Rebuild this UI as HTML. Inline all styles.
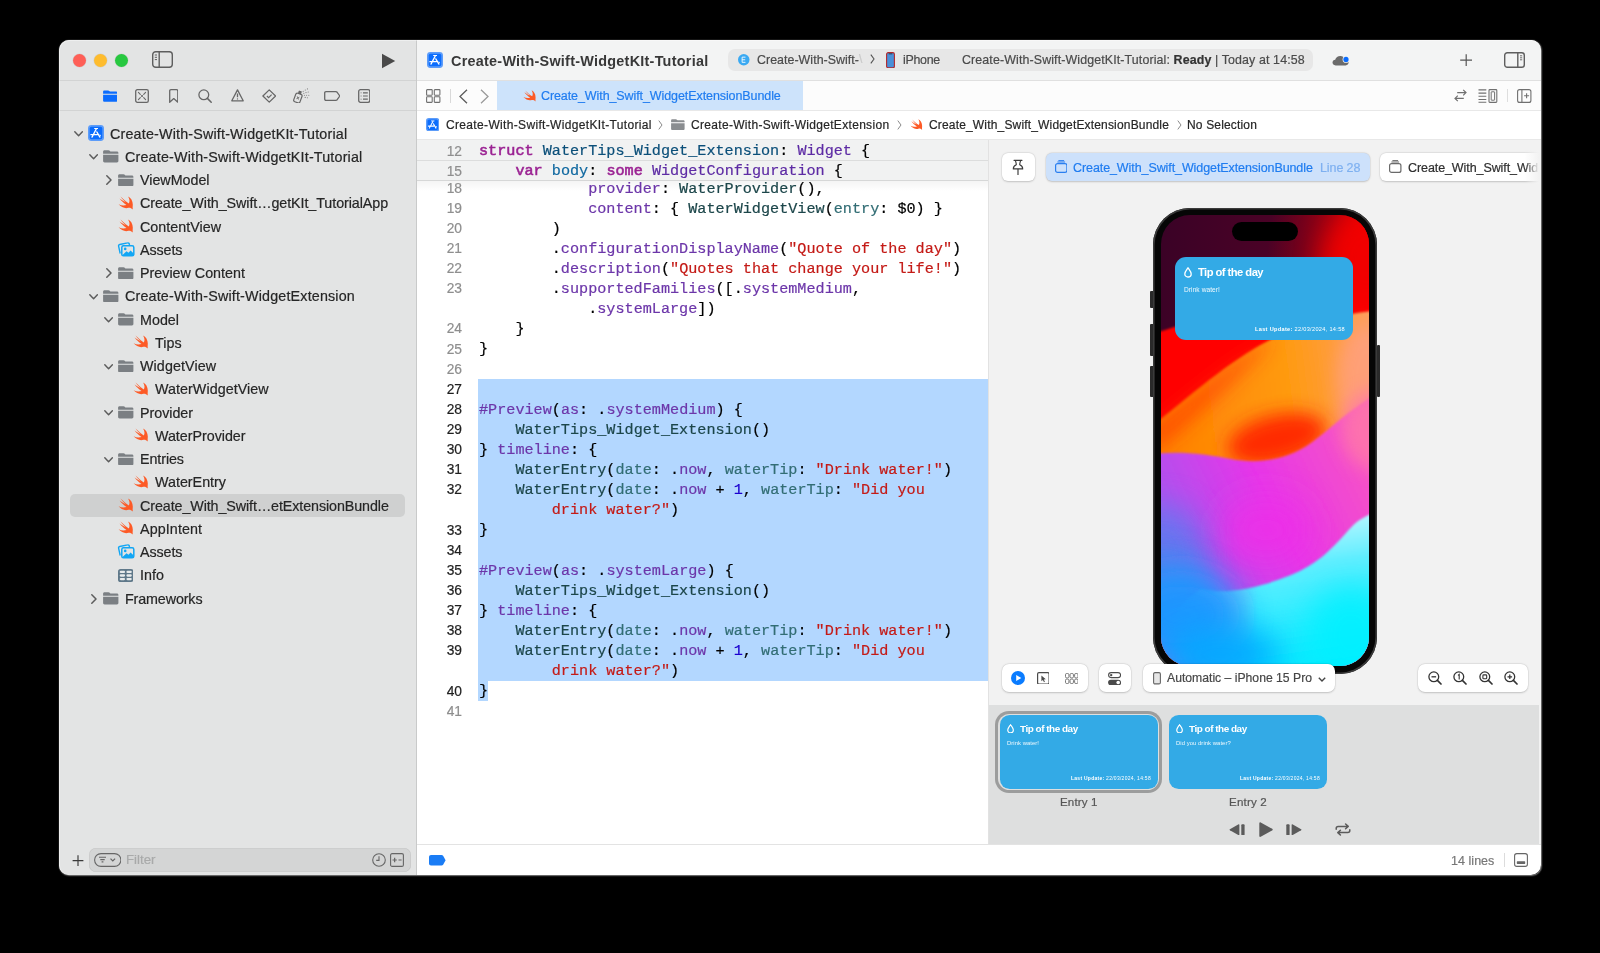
<!DOCTYPE html>
<html><head><meta charset="utf-8">
<style>
html,body{margin:0;padding:0;background:#000;width:1600px;height:953px;overflow:hidden}
.a{position:absolute;display:block}
#win{position:absolute;left:59px;top:40px;width:1482px;height:835px;overflow:hidden;border-radius:10px;background:#fff}
#in{position:absolute;left:-59px;top:-40px;width:1600px;height:953px;font-family:"Liberation Sans",sans-serif;color:#262626}
.t{position:absolute;white-space:pre;will-change:transform}
.sk{-webkit-text-stroke:0.2px currentColor}
.kw{color:#9b2393;-webkit-text-stroke:0.55px #9b2393}
.td{color:#0b4f79}
.ot{color:#5d2ba4}
.od{color:#0f68a0}
.pf{color:#6c36a9}
.pt{color:#1c464a}
.pm{color:#326d74}
.st{color:#c41a16}
.nu{color:#1c00cf}
</style></head>
<body>
<div id="win"><div id="in">
<div class="a" style="left:59px;top:40px;width:357px;height:835px;background:#e3e4e4;"></div>
<div class="a" style="left:416px;top:40px;width:1px;height:835px;background:#c9caca;"></div>
<div class="a" style="left:59px;top:80px;width:357px;height:1px;background:#d2d3d3;"></div>
<div class="a" style="left:59px;top:110px;width:357px;height:1px;background:#d2d3d3;"></div>
<div class="a" style="left:73.0px;top:53.5px;width:13px;height:13px;border-radius:50%;background:#fe5f57;box-shadow:0 0 0 0.5px rgba(0,0,0,0.08)"></div>
<div class="a" style="left:94.0px;top:53.5px;width:13px;height:13px;border-radius:50%;background:#febc2e;box-shadow:0 0 0 0.5px rgba(0,0,0,0.08)"></div>
<div class="a" style="left:115.0px;top:53.5px;width:13px;height:13px;border-radius:50%;background:#28c840;box-shadow:0 0 0 0.5px rgba(0,0,0,0.08)"></div>
<svg class="a" style="left:151.5px;top:51px;" width="21" height="17" viewBox="0 0 21 17"><rect x="0.7" y="0.7" width="19.6" height="15.6" rx="3" fill="none" stroke="#5e5e5e" stroke-width="1.4"/><path d="M7.2 0.7 V16.3" stroke="#5e5e5e" stroke-width="1.4"/><path d="M2.8 4 H5 M2.8 6.3 H5 M2.8 8.6 H5" stroke="#5e5e5e" stroke-width="1"/></svg>
<svg class="a" style="left:381px;top:52.5px;" width="15" height="16" viewBox="0 0 15 16"><path d="M1 0.8 L14.2 8 L1 15.2 Z" fill="#4a4a4a"/></svg>
<svg class="a" style="left:102.8px;top:89.5px;" width="14.5" height="12.2" viewBox="0 0 16 13"><path fill="#0b6cfe" d="M1.6 0.2 H5.6 C6.2 0.2 6.6 0.5 7 0.9 L7.6 1.5 H14.4 C15.3 1.5 15.9 2.1 15.9 3 V3.9 H0.1 V1.7 C0.1 0.8 0.7 0.2 1.6 0.2 Z"/><path fill="#0b6cfe" d="M0.1 4.9 H15.9 V11.3 C15.9 12.2 15.3 12.8 14.4 12.8 H1.6 C0.7 12.8 0.1 12.2 0.1 11.3 Z"/></svg>
<svg class="a" style="left:135px;top:88.8px;" width="14" height="14" viewBox="0 0 14 14"><rect x="0.7" y="0.7" width="12.6" height="12.6" rx="1.6" fill="none" stroke="#676767" stroke-width="1.3"/><path d="M3.4 3.4 L5.3 5.3 M10.6 3.4 L8.7 5.3 M3.4 10.6 L5.3 8.7 M10.6 10.6 L8.7 8.7" stroke="#676767" stroke-width="1.1" stroke-linecap="round"/><circle cx="7" cy="7" r="1.1" fill="#676767"/></svg>
<svg class="a" style="left:168.8px;top:88.8px;" width="9.5" height="14" viewBox="0 0 9.5 14"><path d="M0.7 13.2 V2 C0.7 1.2 1.2 0.7 2 0.7 H7.5 C8.3 0.7 8.8 1.2 8.8 2 V13.2 L4.75 9.6 Z" fill="none" stroke="#676767" stroke-width="1.3" stroke-linejoin="round"/></svg>
<svg class="a" style="left:198.3px;top:88.8px;" width="14" height="14" viewBox="0 0 14 14"><circle cx="5.8" cy="5.8" r="4.9" fill="none" stroke="#676767" stroke-width="1.3"/><path d="M9.4 9.4 L13.2 13.2" stroke="#676767" stroke-width="1.5" stroke-linecap="round"/></svg>
<svg class="a" style="left:230.5px;top:88.5px;" width="13" height="13" viewBox="0 0 13 13"><path d="M6.5 0.9 L12.2 11.8 H0.8 Z" fill="none" stroke="#676767" stroke-width="1.3" stroke-linejoin="round"/><path d="M6.5 4.5 V8.2" stroke="#676767" stroke-width="1.3"/><circle cx="6.5" cy="9.9" r="0.7" fill="#676767"/></svg>
<svg class="a" style="left:261.7px;top:88.6px;" width="14.5" height="14" viewBox="0 0 14.5 14"><path d="M7.25 0.9 L13.6 7 L7.25 13.1 L0.9 7 Z" fill="none" stroke="#676767" stroke-width="1.3" stroke-linejoin="round"/><path d="M4.9 7 L6.6 8.6 L9.6 5.6" stroke="#676767" stroke-width="1.2" fill="none"/></svg>
<svg class="a" style="left:292.5px;top:87.8px;" width="17" height="15.5" viewBox="0 0 17 15.5"><g transform="rotate(20 5 10)"><rect x="1.6" y="5.6" width="6.6" height="9" rx="1.6" fill="none" stroke="#676767" stroke-width="1.2"/><rect x="3.3" y="2.6" width="3.2" height="3" rx="0.6" fill="#676767"/><path d="M3.8 8.8 L6 11.2 M6 8.8 L3.8 11.2" stroke="#676767" stroke-width="0.8"/></g><g fill="#676767" opacity="0.85"><circle cx="10.2" cy="3.2" r="0.55"/><circle cx="12.3" cy="2" r="0.55"/><circle cx="14.4" cy="0.9" r="0.55"/><circle cx="10.8" cy="5.2" r="0.55"/><circle cx="13" cy="4.6" r="0.55"/><circle cx="15.2" cy="4" r="0.55"/><circle cx="11.4" cy="7.2" r="0.55"/><circle cx="13.6" cy="7.2" r="0.55"/><circle cx="15.8" cy="7.2" r="0.55"/><circle cx="12.2" cy="9.4" r="0.55"/><circle cx="14.4" cy="9.8" r="0.55"/></g></svg>
<svg class="a" style="left:323.8px;top:90.5px;" width="16.5" height="10" viewBox="0 0 16.5 10"><path d="M2 0.7 H11.8 C12.4 0.7 12.8 0.9 13.2 1.3 L15.8 5 L13.2 8.7 C12.8 9.1 12.4 9.3 11.8 9.3 H2 C1.2 9.3 0.7 8.8 0.7 8 V2 C0.7 1.2 1.2 0.7 2 0.7 Z" fill="none" stroke="#676767" stroke-width="1.3"/></svg>
<svg class="a" style="left:357.8px;top:88.6px;" width="12.5" height="14" viewBox="0 0 12.5 14"><rect x="0.7" y="0.7" width="11.1" height="12.6" rx="1.8" fill="none" stroke="#676767" stroke-width="1.3"/><path d="M5 3.8 H9.8 M5 7 H9.8 M5 10.2 H9.8" stroke="#676767" stroke-width="1.2"/><path d="M2.6 3.8 H3.6 M2.6 7 H3.6 M2.6 10.2 H3.6" stroke="#676767" stroke-width="0.8"/></svg>
<div class="a" style="left:70px;top:494px;width:335px;height:23px;background:#cfd0d0;border-radius:5px"></div>
<svg class="a" style="left:73.8px;top:131.0px;" width="9.2" height="6" viewBox="0 0 9.2 6"><path d="M0.8 0.8 L4.6 4.8 L8.4 0.8" stroke="#5c5c5c" stroke-width="1.45" fill="none" stroke-linecap="round" stroke-linejoin="round"/></svg>
<svg class="a" style="left:88px;top:125.19999999999999px;" width="16" height="16" viewBox="0 0 16 16"><rect x="0" y="0" width="16" height="16" rx="3.4" fill="#5c9cf9"/><rect x="1.7" y="1.7" width="12.6" height="12.6" rx="1.8" fill="#0b6dfd"/><path d="M8.2 4.1 L4 12.1 M2.9 9.7 H9.2 M8.8 6.9 L11.9 12.1" stroke="#fff" stroke-width="1.25" fill="none" stroke-linecap="round"/><path d="M6.6 3.5 H9.6" stroke="#fff" stroke-width="1.0" stroke-linecap="round"/><path d="M11.3 9.5 L13 9.9 L12.2 11.6" fill="#fff"/></svg>
<div class="t sk" style="left:110.1px;top:125.72px;font-size:14.3px;color:#262626;font-weight:normal;letter-spacing:0.185px;line-height:16.45px;font-family:'Liberation Sans',sans-serif;">Create-With-Swift-WidgetKIt-Tutorial</div>
<svg class="a" style="left:88.8px;top:154.25px;" width="9.2" height="6" viewBox="0 0 9.2 6"><path d="M0.8 0.8 L4.6 4.8 L8.4 0.8" stroke="#5c5c5c" stroke-width="1.45" fill="none" stroke-linecap="round" stroke-linejoin="round"/></svg>
<svg class="a" style="left:103px;top:150.25px;" width="15.5" height="12.6" viewBox="0 0 16 13"><path fill="#7b7f83" d="M1.6 0.2 H5.6 C6.2 0.2 6.6 0.5 7 0.9 L7.6 1.5 H14.4 C15.3 1.5 15.9 2.1 15.9 3 V3.9 H0.1 V1.7 C0.1 0.8 0.7 0.2 1.6 0.2 Z"/><path fill="#7b7f83" d="M0.1 4.9 H15.9 V11.3 C15.9 12.2 15.3 12.8 14.4 12.8 H1.6 C0.7 12.8 0.1 12.2 0.1 11.3 Z"/></svg>
<div class="t sk" style="left:125.1px;top:148.97px;font-size:14.3px;color:#262626;font-weight:normal;letter-spacing:0.190px;line-height:16.45px;font-family:'Liberation Sans',sans-serif;">Create-With-Swift-WidgetKIt-Tutorial</div>
<svg class="a" style="left:106px;top:175.1px;" width="6" height="10" viewBox="0 0 6 10"><path d="M0.8 0.8 L5 5 L0.8 9.2" stroke="#5c5c5c" stroke-width="1.5" fill="none" stroke-linecap="round" stroke-linejoin="round"/></svg>
<svg class="a" style="left:118px;top:173.5px;" width="15.5" height="12.6" viewBox="0 0 16 13"><path fill="#7b7f83" d="M1.6 0.2 H5.6 C6.2 0.2 6.6 0.5 7 0.9 L7.6 1.5 H14.4 C15.3 1.5 15.9 2.1 15.9 3 V3.9 H0.1 V1.7 C0.1 0.8 0.7 0.2 1.6 0.2 Z"/><path fill="#7b7f83" d="M0.1 4.9 H15.9 V11.3 C15.9 12.2 15.3 12.8 14.4 12.8 H1.6 C0.7 12.8 0.1 12.2 0.1 11.3 Z"/></svg>
<div class="t sk" style="left:140.1px;top:172.22px;font-size:14.3px;color:#262626;font-weight:normal;letter-spacing:-0.019px;line-height:16.45px;font-family:'Liberation Sans',sans-serif;">ViewModel</div>
<svg class="a" style="left:118px;top:195.95px;" width="16.0" height="14.0" viewBox="0 0 16 14"><path fill="#fd5a26" d="M0.6 8.3 C3.2 11.3 7.2 12.9 10.3 11.8 C11.6 11.4 12.9 11.7 14.9 13.4 C14.4 11.9 14.8 10.3 14.8 8.4 C14.8 4.8 12.8 1.6 10.1 0.4 C11.7 3.0 11.9 5.6 10.8 7.4 C8.3 5.8 4.9 2.9 2.6 0.5 C4.2 2.9 6.1 4.8 8.1 6.6 C5.7 5.6 3.3 3.8 1.6 2.6 C3.2 4.8 5.6 7.2 8.5 9.1 C6.0 9.8 3.3 9.7 0.6 8.3 Z"/></svg>
<div class="t sk" style="left:140.1px;top:195.47px;font-size:14.3px;color:#262626;font-weight:normal;letter-spacing:-0.071px;line-height:16.45px;font-family:'Liberation Sans',sans-serif;">Create_With_Swift…getKIt_TutorialApp</div>
<svg class="a" style="left:118px;top:219.2px;" width="16.0" height="14.0" viewBox="0 0 16 14"><path fill="#fd5a26" d="M0.6 8.3 C3.2 11.3 7.2 12.9 10.3 11.8 C11.6 11.4 12.9 11.7 14.9 13.4 C14.4 11.9 14.8 10.3 14.8 8.4 C14.8 4.8 12.8 1.6 10.1 0.4 C11.7 3.0 11.9 5.6 10.8 7.4 C8.3 5.8 4.9 2.9 2.6 0.5 C4.2 2.9 6.1 4.8 8.1 6.6 C5.7 5.6 3.3 3.8 1.6 2.6 C3.2 4.8 5.6 7.2 8.5 9.1 C6.0 9.8 3.3 9.7 0.6 8.3 Z"/></svg>
<div class="t sk" style="left:140.1px;top:218.72px;font-size:14.3px;color:#262626;font-weight:normal;letter-spacing:0.018px;line-height:16.45px;font-family:'Liberation Sans',sans-serif;">ContentView</div>
<svg class="a" style="left:117px;top:241.95px;" width="18" height="15" viewBox="0 0 18 15"><path d="M3.2 11.5 L1.6 4.2 C1.4 3.4 1.9 2.7 2.7 2.5 L10.6 0.9 C11.4 0.7 12.1 1.2 12.3 2 L12.5 3" stroke="#12a6f4" stroke-width="1.4" fill="none"/><rect x="4.8" y="3.8" width="12" height="10" rx="1.6" fill="none" stroke="#12a6f4" stroke-width="1.5"/><circle cx="8.2" cy="6.9" r="1.3" fill="#12a6f4"/><path d="M5.5 13 L9.5 9.3 L11.5 10.8 L13.6 8.6 L16.2 11 V13.3 H5.5 Z" fill="#12a6f4"/></svg>
<div class="t sk" style="left:140.1px;top:241.97px;font-size:14.3px;color:#262626;font-weight:normal;letter-spacing:-0.101px;line-height:16.45px;font-family:'Liberation Sans',sans-serif;">Assets</div>
<svg class="a" style="left:106px;top:268.09999999999997px;" width="6" height="10" viewBox="0 0 6 10"><path d="M0.8 0.8 L5 5 L0.8 9.2" stroke="#5c5c5c" stroke-width="1.5" fill="none" stroke-linecap="round" stroke-linejoin="round"/></svg>
<svg class="a" style="left:118px;top:266.5px;" width="15.5" height="12.6" viewBox="0 0 16 13"><path fill="#7b7f83" d="M1.6 0.2 H5.6 C6.2 0.2 6.6 0.5 7 0.9 L7.6 1.5 H14.4 C15.3 1.5 15.9 2.1 15.9 3 V3.9 H0.1 V1.7 C0.1 0.8 0.7 0.2 1.6 0.2 Z"/><path fill="#7b7f83" d="M0.1 4.9 H15.9 V11.3 C15.9 12.2 15.3 12.8 14.4 12.8 H1.6 C0.7 12.8 0.1 12.2 0.1 11.3 Z"/></svg>
<div class="t sk" style="left:140.1px;top:265.22px;font-size:14.3px;color:#262626;font-weight:normal;letter-spacing:0.000px;line-height:16.45px;font-family:'Liberation Sans',sans-serif;">Preview Content</div>
<svg class="a" style="left:88.8px;top:293.75px;" width="9.2" height="6" viewBox="0 0 9.2 6"><path d="M0.8 0.8 L4.6 4.8 L8.4 0.8" stroke="#5c5c5c" stroke-width="1.45" fill="none" stroke-linecap="round" stroke-linejoin="round"/></svg>
<svg class="a" style="left:103px;top:289.75px;" width="15.5" height="12.6" viewBox="0 0 16 13"><path fill="#7b7f83" d="M1.6 0.2 H5.6 C6.2 0.2 6.6 0.5 7 0.9 L7.6 1.5 H14.4 C15.3 1.5 15.9 2.1 15.9 3 V3.9 H0.1 V1.7 C0.1 0.8 0.7 0.2 1.6 0.2 Z"/><path fill="#7b7f83" d="M0.1 4.9 H15.9 V11.3 C15.9 12.2 15.3 12.8 14.4 12.8 H1.6 C0.7 12.8 0.1 12.2 0.1 11.3 Z"/></svg>
<div class="t sk" style="left:125.1px;top:288.47px;font-size:14.3px;color:#262626;font-weight:normal;letter-spacing:0.180px;line-height:16.45px;font-family:'Liberation Sans',sans-serif;">Create-With-Swift-WidgetExtension</div>
<svg class="a" style="left:103.8px;top:317.0px;" width="9.2" height="6" viewBox="0 0 9.2 6"><path d="M0.8 0.8 L4.6 4.8 L8.4 0.8" stroke="#5c5c5c" stroke-width="1.45" fill="none" stroke-linecap="round" stroke-linejoin="round"/></svg>
<svg class="a" style="left:118px;top:313.0px;" width="15.5" height="12.6" viewBox="0 0 16 13"><path fill="#7b7f83" d="M1.6 0.2 H5.6 C6.2 0.2 6.6 0.5 7 0.9 L7.6 1.5 H14.4 C15.3 1.5 15.9 2.1 15.9 3 V3.9 H0.1 V1.7 C0.1 0.8 0.7 0.2 1.6 0.2 Z"/><path fill="#7b7f83" d="M0.1 4.9 H15.9 V11.3 C15.9 12.2 15.3 12.8 14.4 12.8 H1.6 C0.7 12.8 0.1 12.2 0.1 11.3 Z"/></svg>
<div class="t sk" style="left:140.1px;top:311.72px;font-size:14.3px;color:#262626;font-weight:normal;letter-spacing:0.012px;line-height:16.45px;font-family:'Liberation Sans',sans-serif;">Model</div>
<svg class="a" style="left:133px;top:335.45px;" width="16.0" height="14.0" viewBox="0 0 16 14"><path fill="#fd5a26" d="M0.6 8.3 C3.2 11.3 7.2 12.9 10.3 11.8 C11.6 11.4 12.9 11.7 14.9 13.4 C14.4 11.9 14.8 10.3 14.8 8.4 C14.8 4.8 12.8 1.6 10.1 0.4 C11.7 3.0 11.9 5.6 10.8 7.4 C8.3 5.8 4.9 2.9 2.6 0.5 C4.2 2.9 6.1 4.8 8.1 6.6 C5.7 5.6 3.3 3.8 1.6 2.6 C3.2 4.8 5.6 7.2 8.5 9.1 C6.0 9.8 3.3 9.7 0.6 8.3 Z"/></svg>
<div class="t sk" style="left:155.1px;top:334.97px;font-size:14.3px;color:#262626;font-weight:normal;letter-spacing:0.055px;line-height:16.45px;font-family:'Liberation Sans',sans-serif;">Tips</div>
<svg class="a" style="left:103.8px;top:363.5px;" width="9.2" height="6" viewBox="0 0 9.2 6"><path d="M0.8 0.8 L4.6 4.8 L8.4 0.8" stroke="#5c5c5c" stroke-width="1.45" fill="none" stroke-linecap="round" stroke-linejoin="round"/></svg>
<svg class="a" style="left:118px;top:359.5px;" width="15.5" height="12.6" viewBox="0 0 16 13"><path fill="#7b7f83" d="M1.6 0.2 H5.6 C6.2 0.2 6.6 0.5 7 0.9 L7.6 1.5 H14.4 C15.3 1.5 15.9 2.1 15.9 3 V3.9 H0.1 V1.7 C0.1 0.8 0.7 0.2 1.6 0.2 Z"/><path fill="#7b7f83" d="M0.1 4.9 H15.9 V11.3 C15.9 12.2 15.3 12.8 14.4 12.8 H1.6 C0.7 12.8 0.1 12.2 0.1 11.3 Z"/></svg>
<div class="t sk" style="left:140.1px;top:358.22px;font-size:14.3px;color:#262626;font-weight:normal;letter-spacing:0.097px;line-height:16.45px;font-family:'Liberation Sans',sans-serif;">WidgetView</div>
<svg class="a" style="left:133px;top:381.95px;" width="16.0" height="14.0" viewBox="0 0 16 14"><path fill="#fd5a26" d="M0.6 8.3 C3.2 11.3 7.2 12.9 10.3 11.8 C11.6 11.4 12.9 11.7 14.9 13.4 C14.4 11.9 14.8 10.3 14.8 8.4 C14.8 4.8 12.8 1.6 10.1 0.4 C11.7 3.0 11.9 5.6 10.8 7.4 C8.3 5.8 4.9 2.9 2.6 0.5 C4.2 2.9 6.1 4.8 8.1 6.6 C5.7 5.6 3.3 3.8 1.6 2.6 C3.2 4.8 5.6 7.2 8.5 9.1 C6.0 9.8 3.3 9.7 0.6 8.3 Z"/></svg>
<div class="t sk" style="left:155.1px;top:381.47px;font-size:14.3px;color:#262626;font-weight:normal;letter-spacing:0.052px;line-height:16.45px;font-family:'Liberation Sans',sans-serif;">WaterWidgetView</div>
<svg class="a" style="left:103.8px;top:410.0px;" width="9.2" height="6" viewBox="0 0 9.2 6"><path d="M0.8 0.8 L4.6 4.8 L8.4 0.8" stroke="#5c5c5c" stroke-width="1.45" fill="none" stroke-linecap="round" stroke-linejoin="round"/></svg>
<svg class="a" style="left:118px;top:406.0px;" width="15.5" height="12.6" viewBox="0 0 16 13"><path fill="#7b7f83" d="M1.6 0.2 H5.6 C6.2 0.2 6.6 0.5 7 0.9 L7.6 1.5 H14.4 C15.3 1.5 15.9 2.1 15.9 3 V3.9 H0.1 V1.7 C0.1 0.8 0.7 0.2 1.6 0.2 Z"/><path fill="#7b7f83" d="M0.1 4.9 H15.9 V11.3 C15.9 12.2 15.3 12.8 14.4 12.8 H1.6 C0.7 12.8 0.1 12.2 0.1 11.3 Z"/></svg>
<div class="t sk" style="left:140.1px;top:404.72px;font-size:14.3px;color:#262626;font-weight:normal;letter-spacing:-0.030px;line-height:16.45px;font-family:'Liberation Sans',sans-serif;">Provider</div>
<svg class="a" style="left:133px;top:428.45px;" width="16.0" height="14.0" viewBox="0 0 16 14"><path fill="#fd5a26" d="M0.6 8.3 C3.2 11.3 7.2 12.9 10.3 11.8 C11.6 11.4 12.9 11.7 14.9 13.4 C14.4 11.9 14.8 10.3 14.8 8.4 C14.8 4.8 12.8 1.6 10.1 0.4 C11.7 3.0 11.9 5.6 10.8 7.4 C8.3 5.8 4.9 2.9 2.6 0.5 C4.2 2.9 6.1 4.8 8.1 6.6 C5.7 5.6 3.3 3.8 1.6 2.6 C3.2 4.8 5.6 7.2 8.5 9.1 C6.0 9.8 3.3 9.7 0.6 8.3 Z"/></svg>
<div class="t sk" style="left:155.1px;top:427.97px;font-size:14.3px;color:#262626;font-weight:normal;letter-spacing:-0.026px;line-height:16.45px;font-family:'Liberation Sans',sans-serif;">WaterProvider</div>
<svg class="a" style="left:103.8px;top:456.5px;" width="9.2" height="6" viewBox="0 0 9.2 6"><path d="M0.8 0.8 L4.6 4.8 L8.4 0.8" stroke="#5c5c5c" stroke-width="1.45" fill="none" stroke-linecap="round" stroke-linejoin="round"/></svg>
<svg class="a" style="left:118px;top:452.5px;" width="15.5" height="12.6" viewBox="0 0 16 13"><path fill="#7b7f83" d="M1.6 0.2 H5.6 C6.2 0.2 6.6 0.5 7 0.9 L7.6 1.5 H14.4 C15.3 1.5 15.9 2.1 15.9 3 V3.9 H0.1 V1.7 C0.1 0.8 0.7 0.2 1.6 0.2 Z"/><path fill="#7b7f83" d="M0.1 4.9 H15.9 V11.3 C15.9 12.2 15.3 12.8 14.4 12.8 H1.6 C0.7 12.8 0.1 12.2 0.1 11.3 Z"/></svg>
<div class="t sk" style="left:140.1px;top:451.22px;font-size:14.3px;color:#262626;font-weight:normal;letter-spacing:-0.085px;line-height:16.45px;font-family:'Liberation Sans',sans-serif;">Entries</div>
<svg class="a" style="left:133px;top:474.95px;" width="16.0" height="14.0" viewBox="0 0 16 14"><path fill="#fd5a26" d="M0.6 8.3 C3.2 11.3 7.2 12.9 10.3 11.8 C11.6 11.4 12.9 11.7 14.9 13.4 C14.4 11.9 14.8 10.3 14.8 8.4 C14.8 4.8 12.8 1.6 10.1 0.4 C11.7 3.0 11.9 5.6 10.8 7.4 C8.3 5.8 4.9 2.9 2.6 0.5 C4.2 2.9 6.1 4.8 8.1 6.6 C5.7 5.6 3.3 3.8 1.6 2.6 C3.2 4.8 5.6 7.2 8.5 9.1 C6.0 9.8 3.3 9.7 0.6 8.3 Z"/></svg>
<div class="t sk" style="left:155.1px;top:474.47px;font-size:14.3px;color:#262626;font-weight:normal;letter-spacing:0.003px;line-height:16.45px;font-family:'Liberation Sans',sans-serif;">WaterEntry</div>
<svg class="a" style="left:118px;top:498.2px;" width="16.0" height="14.0" viewBox="0 0 16 14"><path fill="#fd5a26" d="M0.6 8.3 C3.2 11.3 7.2 12.9 10.3 11.8 C11.6 11.4 12.9 11.7 14.9 13.4 C14.4 11.9 14.8 10.3 14.8 8.4 C14.8 4.8 12.8 1.6 10.1 0.4 C11.7 3.0 11.9 5.6 10.8 7.4 C8.3 5.8 4.9 2.9 2.6 0.5 C4.2 2.9 6.1 4.8 8.1 6.6 C5.7 5.6 3.3 3.8 1.6 2.6 C3.2 4.8 5.6 7.2 8.5 9.1 C6.0 9.8 3.3 9.7 0.6 8.3 Z"/></svg>
<div class="t sk" style="left:140.1px;top:497.72px;font-size:14.3px;color:#262626;font-weight:normal;letter-spacing:-0.089px;line-height:16.45px;font-family:'Liberation Sans',sans-serif;">Create_With_Swift…etExtensionBundle</div>
<svg class="a" style="left:118px;top:521.45px;" width="16.0" height="14.0" viewBox="0 0 16 14"><path fill="#fd5a26" d="M0.6 8.3 C3.2 11.3 7.2 12.9 10.3 11.8 C11.6 11.4 12.9 11.7 14.9 13.4 C14.4 11.9 14.8 10.3 14.8 8.4 C14.8 4.8 12.8 1.6 10.1 0.4 C11.7 3.0 11.9 5.6 10.8 7.4 C8.3 5.8 4.9 2.9 2.6 0.5 C4.2 2.9 6.1 4.8 8.1 6.6 C5.7 5.6 3.3 3.8 1.6 2.6 C3.2 4.8 5.6 7.2 8.5 9.1 C6.0 9.8 3.3 9.7 0.6 8.3 Z"/></svg>
<div class="t sk" style="left:140.1px;top:520.97px;font-size:14.3px;color:#262626;font-weight:normal;letter-spacing:0.110px;line-height:16.45px;font-family:'Liberation Sans',sans-serif;">AppIntent</div>
<svg class="a" style="left:117px;top:544.2px;" width="18" height="15" viewBox="0 0 18 15"><path d="M3.2 11.5 L1.6 4.2 C1.4 3.4 1.9 2.7 2.7 2.5 L10.6 0.9 C11.4 0.7 12.1 1.2 12.3 2 L12.5 3" stroke="#12a6f4" stroke-width="1.4" fill="none"/><rect x="4.8" y="3.8" width="12" height="10" rx="1.6" fill="none" stroke="#12a6f4" stroke-width="1.5"/><circle cx="8.2" cy="6.9" r="1.3" fill="#12a6f4"/><path d="M5.5 13 L9.5 9.3 L11.5 10.8 L13.6 8.6 L16.2 11 V13.3 H5.5 Z" fill="#12a6f4"/></svg>
<div class="t sk" style="left:140.1px;top:544.22px;font-size:14.3px;color:#262626;font-weight:normal;letter-spacing:-0.101px;line-height:16.45px;font-family:'Liberation Sans',sans-serif;">Assets</div>
<svg class="a" style="left:117.69999999999999px;top:568.75px;" width="15.5" height="13" viewBox="0 0 15.5 13"><rect x="0" y="0" width="15.5" height="13" rx="2.6" fill="#5f7889"/><g fill="#e8ebec"><rect x="1.7" y="1.8" width="5.4" height="2.3" rx="1.1"/><rect x="8.4" y="1.8" width="5.4" height="2.3" rx="1.1"/><rect x="1.7" y="5.35" width="5.4" height="2.3" rx="1.1"/><rect x="8.4" y="5.35" width="5.4" height="2.3" rx="1.1"/><rect x="1.7" y="8.9" width="5.4" height="2.3" rx="1.1"/><rect x="8.4" y="8.9" width="5.4" height="2.3" rx="1.1"/></g></svg>
<div class="t sk" style="left:140.1px;top:567.47px;font-size:14.3px;color:#262626;font-weight:normal;letter-spacing:0.038px;line-height:16.45px;font-family:'Liberation Sans',sans-serif;">Info</div>
<svg class="a" style="left:91px;top:593.6px;" width="6" height="10" viewBox="0 0 6 10"><path d="M0.8 0.8 L5 5 L0.8 9.2" stroke="#5c5c5c" stroke-width="1.5" fill="none" stroke-linecap="round" stroke-linejoin="round"/></svg>
<svg class="a" style="left:103px;top:592.0px;" width="15.5" height="12.6" viewBox="0 0 16 13"><path fill="#7b7f83" d="M1.6 0.2 H5.6 C6.2 0.2 6.6 0.5 7 0.9 L7.6 1.5 H14.4 C15.3 1.5 15.9 2.1 15.9 3 V3.9 H0.1 V1.7 C0.1 0.8 0.7 0.2 1.6 0.2 Z"/><path fill="#7b7f83" d="M0.1 4.9 H15.9 V11.3 C15.9 12.2 15.3 12.8 14.4 12.8 H1.6 C0.7 12.8 0.1 12.2 0.1 11.3 Z"/></svg>
<div class="t sk" style="left:125.1px;top:590.72px;font-size:14.3px;color:#262626;font-weight:normal;letter-spacing:-0.124px;line-height:16.45px;font-family:'Liberation Sans',sans-serif;">Frameworks</div>
<svg class="a" style="left:71.5px;top:854.5px;" width="12" height="12" viewBox="0 0 12 12"><path d="M6 0.3 V10.9 M0.6 5.6 H11.4" stroke="#3a3a3a" stroke-width="1.15"/></svg>
<div class="a" style="left:89px;top:848px;width:321.5px;height:24px;background:#d4d5d5;border-radius:7px;box-shadow:inset 0 0 0 0.6px #c6c7c7"></div>
<svg class="a" style="left:93.5px;top:853px;" width="27.5" height="14" viewBox="0 0 27.5 14"><rect x="0.6" y="0.6" width="26.3" height="12.8" rx="6.4" fill="none" stroke="#666" stroke-width="1.1"/><path d="M5 4.3 H12 M6.3 6.6 H10.7 M7.6 8.9 H9.4" stroke="#666" stroke-width="1.1"/><path d="M16.5 5.6 L18.8 8 L21.1 5.6" stroke="#666" stroke-width="1.2" fill="none"/></svg>
<div class="t sk" style="left:125.5px;top:852.25px;font-size:13.3px;color:#a9aaaa;font-weight:normal;letter-spacing:0px;line-height:15.29px;font-family:'Liberation Sans',sans-serif;">Filter</div>
<svg class="a" style="left:372.3px;top:853px;" width="14" height="14" viewBox="0 0 14 14"><circle cx="7" cy="7" r="6.3" fill="none" stroke="#666" stroke-width="1.1"/><path d="M7 3.2 V7.4 H4.2" stroke="#666" stroke-width="1.1" fill="none"/></svg>
<svg class="a" style="left:390.3px;top:853px;" width="14" height="14" viewBox="0 0 14 14"><rect x="0.6" y="0.6" width="12.8" height="12.8" rx="1.5" fill="none" stroke="#666" stroke-width="1.1"/><path d="M2.5 7 H6.8 M4.65 4.8 V9.2 M8.5 7 H11.6" stroke="#666" stroke-width="1.2"/></svg>
<div class="a" style="left:417px;top:40px;width:1124px;height:40px;background:#f3f4f4;"></div>
<div class="a" style="left:417px;top:80px;width:1124px;height:1px;background:#e0e0e0;"></div>
<div class="a" style="left:417px;top:81px;width:1124px;height:29px;background:#fcfcfc;"></div>
<div class="a" style="left:497px;top:81px;width:306px;height:29px;background:#cde3fb;"></div>
<div class="a" style="left:417px;top:110px;width:1124px;height:1px;background:#e8e8e8;"></div>
<div class="a" style="left:417px;top:111px;width:1124px;height:28px;background:#ffffff;"></div>
<div class="a" style="left:417px;top:139px;width:1124px;height:1px;background:#e8e8e8;"></div>
<div class="a" style="left:417px;top:140px;width:571px;height:704px;background:#ffffff;"></div>
<div class="a" style="left:417px;top:844px;width:1124px;height:1px;background:#e3e3e3;"></div>
<div class="a" style="left:988px;top:140px;width:553px;height:565px;background:#f2f2f2;"></div>
<div class="a" style="left:988px;top:705px;width:553px;height:139px;background:#dedfdf;"></div>
<div class="a" style="left:988px;top:140px;width:1px;height:704px;background:#e2e2e2;"></div>
<svg class="a" style="left:427px;top:52px;" width="16" height="16" viewBox="0 0 16 16"><rect x="0" y="0" width="16" height="16" rx="3.4" fill="#5c9cf9"/><rect x="1.7" y="1.7" width="12.6" height="12.6" rx="1.8" fill="#0b6dfd"/><path d="M8.2 4.1 L4 12.1 M2.9 9.7 H9.2 M8.8 6.9 L11.9 12.1" stroke="#fff" stroke-width="1.25" fill="none" stroke-linecap="round"/><path d="M6.6 3.5 H9.6" stroke="#fff" stroke-width="1.0" stroke-linecap="round"/><path d="M11.3 9.5 L13 9.9 L12.2 11.6" fill="#fff"/></svg>
<div class="t" style="left:451.3px;top:52.53px;font-size:14.4px;color:#383838;font-weight:bold;letter-spacing:0.259px;line-height:16.56px;font-family:'Liberation Sans',sans-serif;">Create-With-Swift-WidgetKIt-Tutorial</div>
<div class="a" style="left:728px;top:48.8px;width:584.5px;height:22.5px;background:#e7e7e7;border-radius:7px"></div>
<svg class="a" style="left:738px;top:54.2px;" width="11.5" height="11.5" viewBox="0 0 12 12"><circle cx="6" cy="6" r="6" fill="#3aa9f2"/><path d="M4.3 3.3 H7.8 M4.3 6 H7.5 M4.3 8.7 H7.8 M4.3 3.3 V8.7" stroke="#fff" stroke-width="0.9" fill="none"/></svg>
<div class="t sk" style="left:756.8px;top:53.07px;font-size:12.4px;color:#4a4a4a;font-weight:normal;letter-spacing:0.044px;line-height:14.26px;font-family:'Liberation Sans',sans-serif;">Create-With-Swift-</div>
<div class="a" style="left:859px;top:55px;width:8px;height:11px;background:linear-gradient(90deg,rgba(231,231,231,0) 0,rgba(231,231,231,.2) 100%)"></div>
<div class="t sk" style="left:858.5px;top:53.44px;font-size:12px;color:#c9c9c9;font-weight:normal;letter-spacing:0px;line-height:13.8px;font-family:'Liberation Sans',sans-serif;">\</div>
<svg class="a" style="left:870px;top:54px;" width="5" height="11" viewBox="0 0 5 11"><path d="M0.8 0.6 L4 5 L0.8 9.4" stroke="#555" stroke-width="1.1" fill="none"/></svg>
<svg class="a" style="left:885.5px;top:51.8px;" width="9" height="16.5" viewBox="0 0 9 16.5"><rect x="0.6" y="0.6" width="7.8" height="15.3" rx="1.6" fill="#4a90d9" stroke="#b3262a" stroke-width="1.1"/><rect x="2.6" y="1.4" width="3.8" height="0.9" rx="0.4" fill="#222"/></svg>
<div class="t sk" style="left:902.7px;top:53.07px;font-size:12.4px;color:#4a4a4a;font-weight:normal;letter-spacing:-0.264px;line-height:14.26px;font-family:'Liberation Sans',sans-serif;">iPhone</div>
<div class="t sk" style="left:962px;top:53.07px;font-size:12.4px;color:#4a4a4a;font-weight:normal;letter-spacing:0.127px;line-height:14.26px;font-family:'Liberation Sans',sans-serif;">Create-With-Swift-WidgetKIt-Tutorial: <b style="color:#333">Ready</b> | Today at 14:58</div>
<svg class="a" style="left:1332px;top:54px;" width="19" height="12" viewBox="0 0 19 12"><path d="M3.6 11.4 C1.7 11.4 0.5 10.2 0.5 8.6 C0.5 7 1.7 5.9 3.2 5.8 C3.8 3.4 5.8 1.9 8.3 1.9 C10.7 1.9 12.6 3.3 13.3 5.3 C15.3 5.4 16.6 6.9 16.6 8.6 C16.6 10.2 15.4 11.4 13.6 11.4 Z" fill="#6b6b6b"/><circle cx="14" cy="5.4" r="3.4" fill="#f3f4f4"/><circle cx="14" cy="5.4" r="2.6" fill="#0a6cfe"/></svg>
<svg class="a" style="left:1459.5px;top:53.8px;" width="12.4" height="12.4" viewBox="0 0 12.4 12.4"><path d="M6.2 0.2 V12.2 M0.2 6.2 H12.2" stroke="#555" stroke-width="1.2"/></svg>
<svg class="a" style="left:1504px;top:51.7px;" width="21" height="16" viewBox="0 0 21 16"><rect x="0.7" y="0.7" width="19.6" height="14.6" rx="2.6" fill="none" stroke="#5e5e5e" stroke-width="1.4"/><path d="M13.8 0.7 V15.3" stroke="#5e5e5e" stroke-width="1.4"/><path d="M16 3.8 H18.2 M16 5.8 H18.2 M16 7.8 H18.2" stroke="#5e5e5e" stroke-width="0.9"/></svg>
<svg class="a" style="left:426px;top:89px;" width="14.5" height="14" viewBox="0 0 14.5 14"><g fill="none" stroke="#707070" stroke-width="1.1"><rect x="0.6" y="0.6" width="5.6" height="5.6" rx="0.6"/><rect x="8.3" y="0.6" width="5.6" height="5.6" rx="0.6"/><rect x="0.6" y="7.8" width="5.6" height="5.6" rx="0.6"/><rect x="8.3" y="7.8" width="5.6" height="5.6" rx="0.6"/></g></svg>
<div class="a" style="left:450px;top:89px;width:1px;height:14px;background:#d9d9d9;"></div>
<svg class="a" style="left:459px;top:88.5px;" width="9" height="15" viewBox="0 0 9 15"><path d="M8 0.8 L1 7.5 L8 14.2" stroke="#5c5c5c" stroke-width="1.3" fill="none"/></svg>
<svg class="a" style="left:480px;top:88.5px;" width="9" height="15" viewBox="0 0 9 15"><path d="M1 0.8 L8 7.5 L1 14.2" stroke="#9a9a9a" stroke-width="1.3" fill="none"/></svg>
<svg class="a" style="left:522.5px;top:90px;" width="13.6" height="11.9" viewBox="0 0 16 14"><path fill="#fd5a26" d="M0.6 8.3 C3.2 11.3 7.2 12.9 10.3 11.8 C11.6 11.4 12.9 11.7 14.9 13.4 C14.4 11.9 14.8 10.3 14.8 8.4 C14.8 4.8 12.8 1.6 10.1 0.4 C11.7 3.0 11.9 5.6 10.8 7.4 C8.3 5.8 4.9 2.9 2.6 0.5 C4.2 2.9 6.1 4.8 8.1 6.6 C5.7 5.6 3.3 3.8 1.6 2.6 C3.2 4.8 5.6 7.2 8.5 9.1 C6.0 9.8 3.3 9.7 0.6 8.3 Z"/></svg>
<div class="t sk" style="left:540.9px;top:89.08px;font-size:12.5px;color:#1f7cf0;font-weight:normal;letter-spacing:-0.089px;line-height:14.37px;font-family:'Liberation Sans',sans-serif;">Create_With_Swift_WidgetExtensionBundle</div>
<svg class="a" style="left:1453.5px;top:88.5px;" width="13" height="13" viewBox="0 0 13 13"><path d="M3.2 3.6 H11.8 M9.2 0.8 L12 3.6 L9.2 6.4 M9.8 9.4 H1.2 M3.8 6.6 L1 9.4 L3.8 12.2" stroke="#707070" stroke-width="1.2" fill="none"/></svg>
<svg class="a" style="left:1478px;top:88.8px;" width="19.5" height="14" viewBox="0 0 19.5 14"><path d="M0.5 0.9 H8.3 M0.5 4.1 H8.3 M0.5 7.3 H8.3 M0.5 10.5 H8.3 M0.5 13.3 H8.3" stroke="#707070" stroke-width="1.1"/><rect x="11" y="0.6" width="7.8" height="12.8" rx="0.8" fill="none" stroke="#707070" stroke-width="1.1"/><rect x="13.2" y="2.8" width="3.4" height="8.4" rx="0.3" fill="none" stroke="#707070" stroke-width="1"/></svg>
<div class="a" style="left:1507px;top:89px;width:1px;height:13px;background:#dedede;"></div>
<svg class="a" style="left:1517px;top:88.8px;" width="14.5" height="14" viewBox="0 0 14.5 14"><rect x="0.6" y="0.6" width="13.3" height="12.8" rx="2" fill="none" stroke="#707070" stroke-width="1.1"/><path d="M4.9 0.6 V13.4 M9.6 4.2 V9.2 M7.1 6.7 H12.1" stroke="#707070" stroke-width="1.1"/></svg>
<svg class="a" style="left:426px;top:118px;" width="13.4" height="13.4" viewBox="0 0 16 16"><rect x="0" y="0" width="16" height="16" rx="3.4" fill="#5c9cf9"/><rect x="1.7" y="1.7" width="12.6" height="12.6" rx="1.8" fill="#0b6dfd"/><path d="M8.2 4.1 L4 12.1 M2.9 9.7 H9.2 M8.8 6.9 L11.9 12.1" stroke="#fff" stroke-width="1.25" fill="none" stroke-linecap="round"/><path d="M6.6 3.5 H9.6" stroke="#fff" stroke-width="1.0" stroke-linecap="round"/><path d="M11.3 9.5 L13 9.9 L12.2 11.6" fill="#fff"/></svg>
<div class="t sk" style="left:445.7px;top:119.24px;font-size:12px;color:#262626;font-weight:normal;letter-spacing:0.339px;line-height:13.8px;font-family:'Liberation Sans',sans-serif;">Create-With-Swift-WidgetKIt-Tutorial</div>
<svg class="a" style="left:658px;top:120px;" width="5" height="10" viewBox="0 0 5 10"><path d="M0.8 0.6 L4 5 L0.8 9.4" stroke="#8a8a8a" stroke-width="1" fill="none"/></svg>
<svg class="a" style="left:671px;top:118.5px;" width="13.7" height="11.2" viewBox="0 0 16 13"><path fill="#8a8d90" d="M1.6 0.2 H5.6 C6.2 0.2 6.6 0.5 7 0.9 L7.6 1.5 H14.4 C15.3 1.5 15.9 2.1 15.9 3 V3.9 H0.1 V1.7 C0.1 0.8 0.7 0.2 1.6 0.2 Z"/><path fill="#8a8d90" d="M0.1 4.9 H15.9 V11.3 C15.9 12.2 15.3 12.8 14.4 12.8 H1.6 C0.7 12.8 0.1 12.2 0.1 11.3 Z"/></svg>
<div class="t sk" style="left:691px;top:119.24px;font-size:12px;color:#262626;font-weight:normal;letter-spacing:0.313px;line-height:13.8px;font-family:'Liberation Sans',sans-serif;">Create-With-Swift-WidgetExtension</div>
<svg class="a" style="left:896.5px;top:120px;" width="5" height="10" viewBox="0 0 5 10"><path d="M0.8 0.6 L4 5 L0.8 9.4" stroke="#8a8a8a" stroke-width="1" fill="none"/></svg>
<svg class="a" style="left:909.5px;top:118.5px;" width="13.12" height="11.48" viewBox="0 0 16 14"><path fill="#fd5a26" d="M0.6 8.3 C3.2 11.3 7.2 12.9 10.3 11.8 C11.6 11.4 12.9 11.7 14.9 13.4 C14.4 11.9 14.8 10.3 14.8 8.4 C14.8 4.8 12.8 1.6 10.1 0.4 C11.7 3.0 11.9 5.6 10.8 7.4 C8.3 5.8 4.9 2.9 2.6 0.5 C4.2 2.9 6.1 4.8 8.1 6.6 C5.7 5.6 3.3 3.8 1.6 2.6 C3.2 4.8 5.6 7.2 8.5 9.1 C6.0 9.8 3.3 9.7 0.6 8.3 Z"/></svg>
<div class="t sk" style="left:929.2px;top:119.24px;font-size:12px;color:#262626;font-weight:normal;letter-spacing:0.168px;line-height:13.8px;font-family:'Liberation Sans',sans-serif;">Create_With_Swift_WidgetExtensionBundle</div>
<svg class="a" style="left:1176.5px;top:120px;" width="5" height="10" viewBox="0 0 5 10"><path d="M0.8 0.6 L4 5 L0.8 9.4" stroke="#8a8a8a" stroke-width="1" fill="none"/></svg>
<div class="t sk" style="left:1187px;top:119.24px;font-size:12px;color:#262626;font-weight:normal;letter-spacing:0.163px;line-height:13.8px;font-family:'Liberation Sans',sans-serif;">No Selection</div>
<div class="a" style="left:417px;top:140px;width:571px;height:20px;background:#f1f2f2;"></div>
<div class="a" style="left:417px;top:160px;width:571px;height:1px;background:#dcdddd;"></div>
<div class="a" style="left:417px;top:161px;width:571px;height:19px;background:#f1f2f2;"></div>
<div class="a" style="left:417px;top:180px;width:571px;height:1px;background:#d6d7d7;"></div>
<div class="a" style="left:417px;top:181px;width:571px;height:10px;background:linear-gradient(180deg,rgba(0,0,0,0.045),rgba(0,0,0,0))"></div>
<div class="a" style="left:478px;top:378.99999999999994px;width:510px;height:301.72499999999997px;background:#b3d7ff;"></div>
<div class="a" style="left:478px;top:680.7249999999999px;width:9.5px;height:20.115px;background:#b3d7ff;"></div>
<div class="t sk" style="left:421.5px;width:40px;text-align:right;top:180.67px;font-size:13.8px;line-height:16px;color:#8e8e8e">18</div>
<div class="t sk" style="left:479px;top:178.53px;font-size:15.17px;line-height:20px;font-family:'Liberation Mono',monospace;color:#000"><span class="pf">            provider</span>: <span class="pt">WaterProvider</span>(),</div>
<div class="t sk" style="left:421.5px;width:40px;text-align:right;top:200.78px;font-size:13.8px;line-height:16px;color:#8e8e8e">19</div>
<div class="t sk" style="left:479px;top:198.64px;font-size:15.17px;line-height:20px;font-family:'Liberation Mono',monospace;color:#000"><span class="pf">            content</span>: { <span class="pt">WaterWidgetView</span>(<span class="pm">entry</span>: $0) }</div>
<div class="t sk" style="left:421.5px;width:40px;text-align:right;top:220.90px;font-size:13.8px;line-height:16px;color:#8e8e8e">20</div>
<div class="t sk" style="left:479px;top:218.76px;font-size:15.17px;line-height:20px;font-family:'Liberation Mono',monospace;color:#000">        )</div>
<div class="t sk" style="left:421.5px;width:40px;text-align:right;top:241.01px;font-size:13.8px;line-height:16px;color:#8e8e8e">21</div>
<div class="t sk" style="left:479px;top:238.87px;font-size:15.17px;line-height:20px;font-family:'Liberation Mono',monospace;color:#000">        .<span class="pf">configurationDisplayName</span>(<span class="st">"Quote of the day"</span>)</div>
<div class="t sk" style="left:421.5px;width:40px;text-align:right;top:261.13px;font-size:13.8px;line-height:16px;color:#8e8e8e">22</div>
<div class="t sk" style="left:479px;top:258.99px;font-size:15.17px;line-height:20px;font-family:'Liberation Mono',monospace;color:#000">        .<span class="pf">description</span>(<span class="st">"Quotes that change your life!"</span>)</div>
<div class="t sk" style="left:421.5px;width:40px;text-align:right;top:281.24px;font-size:13.8px;line-height:16px;color:#8e8e8e">23</div>
<div class="t sk" style="left:479px;top:279.10px;font-size:15.17px;line-height:20px;font-family:'Liberation Mono',monospace;color:#000">        .<span class="pf">supportedFamilies</span>([.<span class="pf">systemMedium</span>,</div>
<div class="t sk" style="left:479px;top:299.22px;font-size:15.17px;line-height:20px;font-family:'Liberation Mono',monospace;color:#000">            .<span class="pf">systemLarge</span>])</div>
<div class="t sk" style="left:421.5px;width:40px;text-align:right;top:321.47px;font-size:13.8px;line-height:16px;color:#8e8e8e">24</div>
<div class="t sk" style="left:479px;top:319.33px;font-size:15.17px;line-height:20px;font-family:'Liberation Mono',monospace;color:#000">    }</div>
<div class="t sk" style="left:421.5px;width:40px;text-align:right;top:341.59px;font-size:13.8px;line-height:16px;color:#8e8e8e">25</div>
<div class="t sk" style="left:479px;top:339.45px;font-size:15.17px;line-height:20px;font-family:'Liberation Mono',monospace;color:#000">}</div>
<div class="t sk" style="left:421.5px;width:40px;text-align:right;top:361.70px;font-size:13.8px;line-height:16px;color:#8e8e8e">26</div>
<div class="t sk" style="left:421.5px;width:40px;text-align:right;top:381.82px;font-size:13.8px;line-height:16px;color:#1f1f1f">27</div>
<div class="t sk" style="left:421.5px;width:40px;text-align:right;top:401.93px;font-size:13.8px;line-height:16px;color:#1f1f1f">28</div>
<div class="t sk" style="left:479px;top:399.79px;font-size:15.17px;line-height:20px;font-family:'Liberation Mono',monospace;color:#000"><span class="pf">#Preview</span>(<span class="pf">as</span>: .<span class="pf">systemMedium</span>) {</div>
<div class="t sk" style="left:421.5px;width:40px;text-align:right;top:422.05px;font-size:13.8px;line-height:16px;color:#1f1f1f">29</div>
<div class="t sk" style="left:479px;top:419.91px;font-size:15.17px;line-height:20px;font-family:'Liberation Mono',monospace;color:#000">    <span class="pt">WaterTips_Widget_Extension</span>()</div>
<div class="t sk" style="left:421.5px;width:40px;text-align:right;top:442.16px;font-size:13.8px;line-height:16px;color:#1f1f1f">30</div>
<div class="t sk" style="left:479px;top:440.02px;font-size:15.17px;line-height:20px;font-family:'Liberation Mono',monospace;color:#000">} <span class="pf">timeline</span>: {</div>
<div class="t sk" style="left:421.5px;width:40px;text-align:right;top:462.28px;font-size:13.8px;line-height:16px;color:#1f1f1f">31</div>
<div class="t sk" style="left:479px;top:460.14px;font-size:15.17px;line-height:20px;font-family:'Liberation Mono',monospace;color:#000">    <span class="pt">WaterEntry</span>(<span class="pm">date</span>: .<span class="pf">now</span>, <span class="pm">waterTip</span>: <span class="st">"Drink water!"</span>)</div>
<div class="t sk" style="left:421.5px;width:40px;text-align:right;top:482.39px;font-size:13.8px;line-height:16px;color:#1f1f1f">32</div>
<div class="t sk" style="left:479px;top:480.25px;font-size:15.17px;line-height:20px;font-family:'Liberation Mono',monospace;color:#000">    <span class="pt">WaterEntry</span>(<span class="pm">date</span>: .<span class="pf">now</span> + <span class="nu">1</span>, <span class="pm">waterTip</span>: <span class="st">"Did you</span></div>
<div class="t sk" style="left:479px;top:500.37px;font-size:15.17px;line-height:20px;font-family:'Liberation Mono',monospace;color:#000">        <span class="st">drink water?"</span>)</div>
<div class="t sk" style="left:421.5px;width:40px;text-align:right;top:522.62px;font-size:13.8px;line-height:16px;color:#1f1f1f">33</div>
<div class="t sk" style="left:479px;top:520.48px;font-size:15.17px;line-height:20px;font-family:'Liberation Mono',monospace;color:#000">}</div>
<div class="t sk" style="left:421.5px;width:40px;text-align:right;top:542.74px;font-size:13.8px;line-height:16px;color:#1f1f1f">34</div>
<div class="t sk" style="left:421.5px;width:40px;text-align:right;top:562.85px;font-size:13.8px;line-height:16px;color:#1f1f1f">35</div>
<div class="t sk" style="left:479px;top:560.71px;font-size:15.17px;line-height:20px;font-family:'Liberation Mono',monospace;color:#000"><span class="pf">#Preview</span>(<span class="pf">as</span>: .<span class="pf">systemLarge</span>) {</div>
<div class="t sk" style="left:421.5px;width:40px;text-align:right;top:582.97px;font-size:13.8px;line-height:16px;color:#1f1f1f">36</div>
<div class="t sk" style="left:479px;top:580.83px;font-size:15.17px;line-height:20px;font-family:'Liberation Mono',monospace;color:#000">    <span class="pt">WaterTips_Widget_Extension</span>()</div>
<div class="t sk" style="left:421.5px;width:40px;text-align:right;top:603.08px;font-size:13.8px;line-height:16px;color:#1f1f1f">37</div>
<div class="t sk" style="left:479px;top:600.94px;font-size:15.17px;line-height:20px;font-family:'Liberation Mono',monospace;color:#000">} <span class="pf">timeline</span>: {</div>
<div class="t sk" style="left:421.5px;width:40px;text-align:right;top:623.20px;font-size:13.8px;line-height:16px;color:#1f1f1f">38</div>
<div class="t sk" style="left:479px;top:621.06px;font-size:15.17px;line-height:20px;font-family:'Liberation Mono',monospace;color:#000">    <span class="pt">WaterEntry</span>(<span class="pm">date</span>: .<span class="pf">now</span>, <span class="pm">waterTip</span>: <span class="st">"Drink water!"</span>)</div>
<div class="t sk" style="left:421.5px;width:40px;text-align:right;top:643.31px;font-size:13.8px;line-height:16px;color:#1f1f1f">39</div>
<div class="t sk" style="left:479px;top:641.17px;font-size:15.17px;line-height:20px;font-family:'Liberation Mono',monospace;color:#000">    <span class="pt">WaterEntry</span>(<span class="pm">date</span>: .<span class="pf">now</span> + <span class="nu">1</span>, <span class="pm">waterTip</span>: <span class="st">"Did you</span></div>
<div class="t sk" style="left:479px;top:661.29px;font-size:15.17px;line-height:20px;font-family:'Liberation Mono',monospace;color:#000">        <span class="st">drink water?"</span>)</div>
<div class="t sk" style="left:421.5px;width:40px;text-align:right;top:683.54px;font-size:13.8px;line-height:16px;color:#1f1f1f">40</div>
<div class="t sk" style="left:479px;top:681.40px;font-size:15.17px;line-height:20px;font-family:'Liberation Mono',monospace;color:#000">}</div>
<div class="t sk" style="left:421.5px;width:40px;text-align:right;top:703.66px;font-size:13.8px;line-height:16px;color:#8e8e8e">41</div>
<div class="a" style="left:417px;top:140px;width:571px;height:20px;background:#f1f2f2;"></div>
<div class="a" style="left:417px;top:160px;width:571px;height:1px;background:#dcdddd;"></div>
<div class="a" style="left:417px;top:161px;width:571px;height:19px;background:#f1f2f2;"></div>
<div class="a" style="left:417px;top:180px;width:571px;height:1px;background:#d6d7d7;"></div>
<div class="t sk" style="left:421.5px;width:40px;text-align:right;top:143.52px;font-size:13.8px;line-height:16px;color:#8e8e8e">12</div>
<div class="t sk" style="left:421.5px;width:40px;text-align:right;top:163.62px;font-size:13.8px;line-height:16px;color:#8e8e8e">15</div>
<div class="t sk" style="left:479px;top:141.38px;font-size:15.17px;line-height:20px;font-family:'Liberation Mono',monospace;color:#000"><span class="kw">struct</span> <span class="td">WaterTips_Widget_Extension</span>: <span class="ot">Widget</span> {</div>
<div class="t sk" style="left:479px;top:161.48px;font-size:15.17px;line-height:20px;font-family:'Liberation Mono',monospace;color:#000">    <span class="kw">var</span> <span class="od">body</span>: <span class="kw">some</span> <span class="ot">WidgetConfiguration</span> {</div>
<svg class="a" style="left:428.5px;top:855px;" width="17" height="10.5" viewBox="0 0 17 10.5"><path d="M2 0 H12.5 C13.2 0 13.7 0.3 14.1 0.8 L16.6 5.25 L14.1 9.7 C13.7 10.2 13.2 10.5 12.5 10.5 H2 C0.9 10.5 0 9.6 0 8.5 V2 C0 0.9 0.9 0 2 0 Z" fill="#1a7cf5"/></svg>
<div class="a" style="left:1001.7px;top:153.2px;width:33.3px;height:27.6px;background:#ffffff;border-radius:6px;box-shadow:0 0.5px 2px rgba(0,0,0,0.18),0 0 0 0.5px rgba(0,0,0,0.06)"></div>
<svg class="a" style="left:1011px;top:158.5px;" width="14" height="16.5" viewBox="0 0 14 16.5"><path d="M3 1.3 H11 M4.3 1.3 C4.8 3 5.3 4 5.3 5.8 C3.5 6.5 2.3 7.6 2.3 9.9 H11.7 C11.7 7.6 10.5 6.5 8.7 5.8 C8.7 4 9.2 3 9.7 1.3 M7 9.9 V15.8" stroke="#3a3a3a" stroke-width="1.15" fill="none" stroke-linejoin="round" stroke-linecap="round"/></svg>
<div class="a" style="left:1045.5px;top:153.2px;width:324px;height:27.6px;background:#cde1fb;border-radius:6px;box-shadow:0 0.5px 2px rgba(0,0,0,0.18),0 0 0 0.5px rgba(0,0,0,0.06)"></div>
<svg class="a" style="left:1054.6px;top:159.8px;" width="12.5" height="13" viewBox="0 0 12.5 13"><rect x="0.6" y="3.6" width="11.3" height="8.8" rx="2" fill="none" stroke="#2a7ff0" stroke-width="1.2"/><path d="M2.4 2 H10.1 M3.4 0.6 H9.1" stroke="#2a7ff0" stroke-width="1"/></svg>
<div class="t sk" style="left:1073.2px;top:160.98px;font-size:12.5px;color:#1f7cf0;font-weight:normal;letter-spacing:-0.087px;line-height:14.37px;font-family:'Liberation Sans',sans-serif;">Create_With_Swift_WidgetExtensionBundle</div>
<div class="t sk" style="left:1319.7px;top:160.98px;font-size:12.5px;color:#7eb0f0;font-weight:normal;letter-spacing:-0.101px;line-height:14.37px;font-family:'Liberation Sans',sans-serif;">Line 28</div>
<div class="a" style="left:1380px;top:153.2px;width:175px;height:27.6px;background:#ffffff;border-radius:6px;box-shadow:0 0.5px 2px rgba(0,0,0,0.18),0 0 0 0.5px rgba(0,0,0,0.06)"></div>
<svg class="a" style="left:1389px;top:159.8px;" width="12.5" height="13" viewBox="0 0 12.5 13"><rect x="0.6" y="3.6" width="11.3" height="8.8" rx="2" fill="none" stroke="#6a6a6a" stroke-width="1.2"/><path d="M2.4 2 H10.1 M3.4 0.6 H9.1" stroke="#6a6a6a" stroke-width="1"/></svg>
<div class="t sk" style="left:1407.7px;top:160.98px;font-size:12.5px;color:#2e2e2e;font-weight:normal;letter-spacing:-0.087px;line-height:14.37px;font-family:'Liberation Sans',sans-serif;">Create_With_Swift_WidgetExtensionBundle</div>
<div class="a" style="left:1500px;top:150px;width:41px;height:34px;background:linear-gradient(90deg,rgba(242,242,242,0) 0,rgba(242,242,242,0.0) 60%,#f2f2f2 95%)"></div>
<div class="a" style="left:1538.5px;top:140px;width:2.5px;height:704px;background:#f2f2f2;"></div>
<div class="a" style="left:1150px;top:291px;width:3.5px;height:17px;background:#2a2a2a;border-radius:1px"></div>
<div class="a" style="left:1150px;top:324px;width:3.5px;height:32px;background:#2a2a2a;border-radius:1px"></div>
<div class="a" style="left:1150px;top:365.5px;width:3.5px;height:31.5px;background:#2a2a2a;border-radius:1px"></div>
<div class="a" style="left:1376.5px;top:344.5px;width:3.2px;height:52.5px;background:#2a2a2a;border-radius:1px"></div>
<div class="a" style="left:1153px;top:207.5px;width:224px;height:466.3px;background:#060606;border-radius:37px;box-shadow:inset 0 0 0 1.6px #3b3b3b"></div>
<svg class="a" style="left:1161px;top:215px;" width="208" height="451" viewBox="0 0 208 451">
<defs>
<clipPath id="scr"><rect x="0" y="0" width="208" height="451" rx="29"/></clipPath>
<linearGradient id="gTop" x1="0" y1="0" x2="1" y2="0.25">
 <stop offset="0" stop-color="#3a0226"/><stop offset="0.5" stop-color="#4a0226"/><stop offset="0.78" stop-color="#9a0012"/><stop offset="1" stop-color="#ee0000"/></linearGradient>
<linearGradient id="gOr" x1="0" y1="0.2" x2="1" y2="0">
 <stop offset="0" stop-color="#ff8000"/><stop offset="0.55" stop-color="#ff9a10"/><stop offset="1" stop-color="#ffa070"/></linearGradient>
<linearGradient id="gMg" x1="0" y1="0.6" x2="1" y2="0">
 <stop offset="0" stop-color="#9a5cf0"/><stop offset="0.45" stop-color="#e636e8"/><stop offset="1" stop-color="#ff62b4"/></linearGradient>
<linearGradient id="gCy" x1="0.3" y1="0" x2="0.5" y2="1">
 <stop offset="0" stop-color="#e6fbff"/><stop offset="0.4" stop-color="#60eeff"/><stop offset="1" stop-color="#00eaff"/></linearGradient>
<linearGradient id="mkg" x1="0" y1="0" x2="1" y2="0"><stop offset="0.05" stop-color="#000"/><stop offset="0.45" stop-color="#fff"/></linearGradient>
<mask id="mk" maskUnits="userSpaceOnUse" x="-20" y="0" width="260" height="470"><rect x="-20" y="0" width="260" height="470" fill="url(#mkg)"/></mask>
<filter id="bl1" x="-20%" y="-20%" width="140%" height="140%"><feGaussianBlur stdDeviation="1"/></filter>
<filter id="bl3" x="-20%" y="-20%" width="140%" height="140%"><feGaussianBlur stdDeviation="3"/></filter>
<filter id="bl8" x="-50%" y="-50%" width="200%" height="200%"><feGaussianBlur stdDeviation="9"/></filter>
<filter id="bl15" x="-80%" y="-80%" width="260%" height="260%"><feGaussianBlur stdDeviation="16"/></filter>
</defs>
<g clip-path="url(#scr)">
<rect x="0" y="0" width="208" height="451" fill="url(#gTop)"/>
<ellipse cx="215" cy="70" rx="45" ry="80" fill="#ff0000" filter="url(#bl15)" opacity="0.9"/>
<path d="M-10 120 C10 112 40 104 100 92 C150 80 190 45 230 25 L230 460 L-10 460 Z" fill="#ff0000" filter="url(#bl1)"/>
<ellipse cx="205" cy="45" rx="40" ry="50" fill="#f00000" filter="url(#bl15)" opacity="0.9"/>
<path d="M-10 212 C30 180 75 140 115 122 C150 106 185 98 230 94 L230 460 L-10 460 Z" fill="url(#gOr)" filter="url(#bl1)"/>
<path d="M-10 212 C30 180 75 140 115 122 C90 150 40 200 -10 240 Z" fill="#ff2a00" filter="url(#bl8)" opacity="0.55"/>
<ellipse cx="205" cy="165" rx="30" ry="55" fill="#ffa088" filter="url(#bl8)" opacity="0.7"/>
<ellipse cx="116" cy="224" rx="50" ry="24" transform="rotate(-14 116 224)" fill="#ff2800" filter="url(#bl8)" opacity="0.95"/>
<path d="M-10 239 C20 236 45 239 70 244 C95 249 125 246 150 228 C170 214 185 196 230 170 L230 460 L-10 460 Z" fill="url(#gMg)" filter="url(#bl1)"/>
<ellipse cx="215" cy="215" rx="35" ry="40" fill="#ff78a8" filter="url(#bl8)" opacity="0.8"/>
<ellipse cx="105" cy="315" rx="45" ry="35" fill="#ee2ee8" filter="url(#bl15)" opacity="0.8"/>
<ellipse cx="0" cy="340" rx="45" ry="50" fill="#6478f0" filter="url(#bl15)" opacity="0.9"/>
<ellipse cx="0" cy="380" rx="50" ry="40" fill="#4a88f0" filter="url(#bl15)" opacity="0.9"/>
<path d="M40 374 C70 380 100 372 130 360 C155 350 170 335 185 318 C195 306 202 300 230 292 L230 460 L-10 460 L-10 440 C5 410 20 385 40 374 Z" fill="url(#gCy)" filter="url(#bl1)" mask="url(#mk)"/>
<ellipse cx="20" cy="400" rx="60" ry="45" fill="#1a98ff" filter="url(#bl15)" opacity="0.95"/>
<ellipse cx="60" cy="440" rx="60" ry="30" fill="#00a8ff" filter="url(#bl15)" opacity="0.9"/>
<ellipse cx="190" cy="420" rx="45" ry="50" fill="#00f0ff" filter="url(#bl15)" opacity="0.85"/>
</g>
</svg>
<div class="a" style="left:1231.9px;top:221.7px;width:65.8px;height:19.2px;background:#000;border-radius:10px"></div>
<div class="a" style="left:1175.4px;top:257.4px;width:178.0px;height:83.0px;background:#33aae6;border-radius:11.00px"></div>
<svg class="a" style="left:1184.2px;top:267.2px;" width="8.0" height="10.6" viewBox="0 0 8 10.6"><path d="M4 0.8 C5.4 2.8 7.2 4.8 7.2 6.9 C7.2 8.7 5.8 10 4 10 C2.2 10 0.8 8.7 0.8 6.9 C0.8 4.8 2.6 2.8 4 0.8 Z" fill="none" stroke="#fff" stroke-width="1.3"/></svg>
<div class="t" style="left:1198.2px;top:266.28px;font-size:11.2px;color:#ffffff;font-weight:bold;letter-spacing:-0.537px;line-height:12.88px;font-family:'Liberation Sans',sans-serif;">Tip of the day</div>
<div class="t" style="left:1183.7px;top:286.02px;font-size:6.6px;color:rgba(255,255,255,0.92);font-weight:normal;letter-spacing:0.069px;line-height:7.59px;font-family:'Liberation Sans',sans-serif;">Drink water!</div>
<div class="t" style="left:1255.4px;top:326.24px;font-size:5.6px;color:#ffffff;font-weight:normal;letter-spacing:0.316px;line-height:6.44px;font-family:'Liberation Sans',sans-serif;"><b>Last Update:</b> 22/03/2024, 14:58</div>
<div class="a" style="left:1001.8px;top:664.3px;width:86px;height:27.4px;background:#ffffff;border-radius:7px;box-shadow:0 0.5px 2px rgba(0,0,0,0.18),0 0 0 0.5px rgba(0,0,0,0.06)"></div>
<svg class="a" style="left:1011px;top:671px;" width="14" height="14" viewBox="0 0 14 14"><circle cx="7" cy="7" r="7" fill="#0a7cff"/><path d="M5.2 3.9 L10.3 7 L5.2 10.1 Z" fill="#fff"/></svg>
<svg class="a" style="left:1036.5px;top:671.8px;" width="12.7" height="12.7" viewBox="0 0 12.7 12.7"><rect x="0.6" y="0.6" width="11.5" height="11.5" rx="1.3" fill="none" stroke="#4a4a4a" stroke-width="1.2"/><path d="M4.4 3.5 L8.8 7.2 L6.8 7.5 L7.9 9.8 L7 10.2 L5.9 7.9 L4.4 9.2 Z" fill="#4a4a4a"/></svg>
<svg class="a" style="left:1064.8px;top:672.5px;" width="13.5" height="11" viewBox="0 0 13.5 11"><g fill="none" stroke="#6a6a6a" stroke-width="0.9"><rect x="0.5" y="0.5" width="3.4" height="4.4" rx="1.2"/><rect x="5.05" y="0.5" width="3.4" height="4.4" rx="1.2"/><rect x="9.6" y="0.5" width="3.4" height="4.4" rx="1.2"/><rect x="0.5" y="6.1" width="3.4" height="4.4" rx="1.2"/><rect x="5.05" y="6.1" width="3.4" height="4.4" rx="1.2"/><rect x="9.6" y="6.1" width="3.4" height="4.4" rx="1.2"/></g></svg>
<div class="a" style="left:1098.6px;top:664.3px;width:32.8px;height:27.4px;background:#ffffff;border-radius:7px;box-shadow:0 0.5px 2px rgba(0,0,0,0.18),0 0 0 0.5px rgba(0,0,0,0.06)"></div>
<svg class="a" style="left:1108.2px;top:671.7px;" width="13.2" height="13.4" viewBox="0 0 13.2 13.4"><rect x="0.6" y="0.6" width="12" height="5" rx="2.5" fill="none" stroke="#4a4a4a" stroke-width="1.1"/><circle cx="3.2" cy="3.1" r="1.2" fill="#4a4a4a"/><rect x="0.1" y="7.7" width="13" height="5.7" rx="2.85" fill="#4a4a4a"/><circle cx="10.2" cy="10.55" r="1.8" fill="#fff"/></svg>
<div class="a" style="left:1142.9px;top:664.3px;width:192.2px;height:27.4px;background:#ffffff;border-radius:7px;box-shadow:0 0.5px 2px rgba(0,0,0,0.18),0 0 0 0.5px rgba(0,0,0,0.06)"></div>
<svg class="a" style="left:1152.7px;top:672.2px;" width="8" height="12.5" viewBox="0 0 8 12.5"><rect x="0.6" y="0.6" width="6.8" height="11.3" rx="1.4" fill="#e6e6e6" stroke="#666" stroke-width="1.1"/></svg>
<div class="t sk" style="left:1167.2px;top:671.16px;font-size:12.2px;color:#474747;font-weight:normal;letter-spacing:0.001px;line-height:14.03px;font-family:'Liberation Sans',sans-serif;">Automatic – iPhone 15 Pro</div>
<svg class="a" style="left:1318px;top:676.5px;" width="8" height="5" viewBox="0 0 8 5"><path d="M0.8 0.8 L4 4 L7.2 0.8" stroke="#444" stroke-width="1.4" fill="none"/></svg>
<div class="a" style="left:1418.1px;top:664.3px;width:110px;height:27.6px;background:#ffffff;border-radius:7px;box-shadow:0 0.5px 2px rgba(0,0,0,0.18),0 0 0 0.5px rgba(0,0,0,0.06)"></div>
<svg class="a" style="left:1427.8px;top:671.3000000000001px;" width="14" height="14" viewBox="0 0 14 14"><circle cx="5.8" cy="5.8" r="4.9" fill="none" stroke="#333" stroke-width="1.3"/><path d="M9.4 9.4 L13 13" stroke="#333" stroke-width="1.7" stroke-linecap="round"/><path d="M3.5 5.8 H8.1" stroke="#333" stroke-width="1.3"/></svg>
<svg class="a" style="left:1453.3px;top:671.3000000000001px;" width="14" height="14" viewBox="0 0 14 14"><circle cx="5.8" cy="5.8" r="4.9" fill="none" stroke="#333" stroke-width="1.3"/><path d="M9.4 9.4 L13 13" stroke="#333" stroke-width="1.7" stroke-linecap="round"/><path d="M5 4.3 L6.2 3.3 V8.4" stroke="#333" stroke-width="1.1" fill="none"/></svg>
<svg class="a" style="left:1478.8px;top:671.3000000000001px;" width="14" height="14" viewBox="0 0 14 14"><circle cx="5.8" cy="5.8" r="4.9" fill="none" stroke="#333" stroke-width="1.3"/><path d="M9.4 9.4 L13 13" stroke="#333" stroke-width="1.7" stroke-linecap="round"/><rect x="3.9" y="3.9" width="3.8" height="3.8" rx="0.8" fill="none" stroke="#333" stroke-width="1.1"/></svg>
<svg class="a" style="left:1504.3px;top:671.3000000000001px;" width="14" height="14" viewBox="0 0 14 14"><circle cx="5.8" cy="5.8" r="4.9" fill="none" stroke="#333" stroke-width="1.3"/><path d="M9.4 9.4 L13 13" stroke="#333" stroke-width="1.7" stroke-linecap="round"/><path d="M3.5 5.8 H8.1 M5.8 3.5 V8.1" stroke="#333" stroke-width="1.2"/></svg>
<div class="a" style="left:995.4px;top:710.9px;width:166.5px;height:82px;background:#9c9d9d;border-radius:14px"></div>
<div class="a" style="left:998.2px;top:713.7px;width:160.9px;height:76.4px;background:#dedfdf;border-radius:11.5px"></div>
<div class="a" style="left:999.6px;top:715px;width:158.064px;height:73.70400000000001px;background:#33aae6;border-radius:9.77px"></div>
<svg class="a" style="left:1007.4144px;top:723.7024px;" width="7.104" height="9.412799999999999" viewBox="0 0 8 10.6"><path d="M4 0.8 C5.4 2.8 7.2 4.8 7.2 6.9 C7.2 8.7 5.8 10 4 10 C2.2 10 0.8 8.7 0.8 6.9 C0.8 4.8 2.6 2.8 4 0.8 Z" fill="none" stroke="#fff" stroke-width="1.3"/></svg>
<div class="t" style="left:1019.85px;top:722.88px;font-size:9.95px;color:#ffffff;font-weight:bold;letter-spacing:-0.478px;line-height:11.44px;font-family:'Liberation Sans',sans-serif;">Tip of the day</div>
<div class="t" style="left:1006.97px;top:740.41px;font-size:5.86px;color:rgba(255,255,255,0.92);font-weight:normal;letter-spacing:0.059px;line-height:6.74px;font-family:'Liberation Sans',sans-serif;">Drink water!</div>
<div class="t" style="left:1070.64px;top:776.13px;font-size:4.97px;color:#ffffff;font-weight:normal;letter-spacing:0.287px;line-height:5.72px;font-family:'Liberation Sans',sans-serif;"><b>Last Update:</b> 22/03/2024, 14:58</div>
<div class="a" style="left:1168.6px;top:715px;width:158.064px;height:73.70400000000001px;background:#33aae6;border-radius:9.77px"></div>
<svg class="a" style="left:1176.4144px;top:723.7024px;" width="7.104" height="9.412799999999999" viewBox="0 0 8 10.6"><path d="M4 0.8 C5.4 2.8 7.2 4.8 7.2 6.9 C7.2 8.7 5.8 10 4 10 C2.2 10 0.8 8.7 0.8 6.9 C0.8 4.8 2.6 2.8 4 0.8 Z" fill="none" stroke="#fff" stroke-width="1.3"/></svg>
<div class="t" style="left:1188.85px;top:722.88px;font-size:9.95px;color:#ffffff;font-weight:bold;letter-spacing:-0.478px;line-height:11.44px;font-family:'Liberation Sans',sans-serif;">Tip of the day</div>
<div class="t" style="left:1175.97px;top:740.41px;font-size:5.86px;color:rgba(255,255,255,0.92);font-weight:normal;letter-spacing:0.069px;line-height:6.74px;font-family:'Liberation Sans',sans-serif;">Did you drink water?</div>
<div class="t" style="left:1239.64px;top:776.13px;font-size:4.97px;color:#ffffff;font-weight:normal;letter-spacing:0.287px;line-height:5.72px;font-family:'Liberation Sans',sans-serif;"><b>Last Update:</b> 22/03/2024, 14:58</div>
<div class="t sk" style="left:1059.8px;top:795.21px;font-size:11.6px;color:#555555;font-weight:normal;letter-spacing:0.110px;line-height:13.34px;font-family:'Liberation Sans',sans-serif;">Entry 1</div>
<div class="t sk" style="left:1228.7px;top:795.21px;font-size:11.6px;color:#555555;font-weight:normal;letter-spacing:0.182px;line-height:13.34px;font-family:'Liberation Sans',sans-serif;">Entry 2</div>
<svg class="a" style="left:1228.5px;top:823.5px;" width="16" height="11.5" viewBox="0 0 16 11.5"><path d="M9.6 0.3 C10 0.1 10.4 0.4 10.4 0.9 V10.6 C10.4 11.1 10 11.4 9.6 11.2 L0.9 6.3 C0.4 6 0.4 5.5 0.9 5.2 Z" fill="#5b5b5b"/><rect x="12.3" y="0.3" width="3.3" height="11" rx="0.9" fill="#5b5b5b"/></svg>
<svg class="a" style="left:1259px;top:821.8px;" width="14" height="15.2" viewBox="0 0 14 15.2"><path d="M0.3 1.2 C0.3 0.4 1 0 1.7 0.4 L13.2 6.8 C13.9 7.2 13.9 8 13.2 8.4 L1.7 14.8 C1 15.2 0.3 14.8 0.3 14 Z" fill="#5b5b5b"/></svg>
<svg class="a" style="left:1285.7px;top:823.5px;" width="16" height="11.5" viewBox="0 0 16 11.5"><rect x="0.3" y="0.3" width="3.3" height="11" rx="0.9" fill="#5b5b5b"/><path d="M6.4 0.3 C6 0.1 5.6 0.4 5.6 0.9 V10.6 C5.6 11.1 6 11.4 6.4 11.2 L15.1 6.3 C15.6 6 15.6 5.5 15.1 5.2 Z" fill="#5b5b5b"/></svg>
<svg class="a" style="left:1334.5px;top:822.8px;" width="16" height="13" viewBox="0 0 16 13"><path d="M1.2 6.3 V5.4 C1.2 4.2 2 3.4 3.2 3.4 H12.8 M10.6 1 L13.2 3.4 L10.6 5.8 M14.8 6.7 V7.6 C14.8 8.8 14 9.6 12.8 9.6 H3.2 M5.4 7.2 L2.8 9.6 L5.4 12" stroke="#5b5b5b" stroke-width="1.5" fill="none" stroke-linecap="round" stroke-linejoin="round"/></svg>
<div class="t sk" style="left:1450.6px;top:853.68px;font-size:12.5px;color:#777777;font-weight:normal;letter-spacing:0.039px;line-height:14.37px;font-family:'Liberation Sans',sans-serif;">14 lines</div>
<div class="a" style="left:1504px;top:853px;width:1px;height:14px;background:#dcdcdc;"></div>
<svg class="a" style="left:1514px;top:853px;" width="14" height="14" viewBox="0 0 14 14"><rect x="0.6" y="0.6" width="12.8" height="12.8" rx="2.2" fill="none" stroke="#666" stroke-width="1.1"/><rect x="2.8" y="8.3" width="8.4" height="2.6" rx="0.6" fill="#666"/></svg>
</div></div>
<div style="position:absolute;left:58.5px;top:39.5px;width:1483px;height:836px;border-radius:10.5px;box-shadow:0 0 0 0.8px rgba(80,80,80,0.35), inset 0 0 0 1px rgba(255,255,255,0.4);pointer-events:none"></div>
</body></html>
